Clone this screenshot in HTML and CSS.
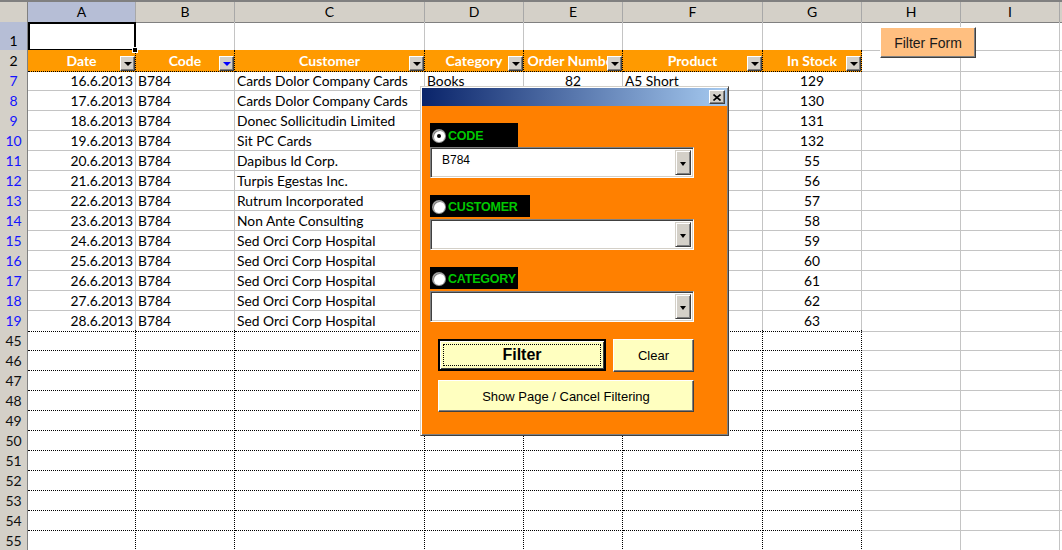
FILE: index.html
```html
<!DOCTYPE html>
<html>
<head>
<meta charset="utf-8">
<link rel="stylesheet" href="styles.css">
</head>
<body>
<div class="sheet">
  <div class="row colhead">
    <div class="corner"></div>
    <div class="ch sel">A</div>
    <div class="ch">B</div>
    <div class="ch">C</div>
    <div class="ch">D</div>
    <div class="ch">E</div>
    <div class="ch">F</div>
    <div class="ch">G</div>
    <div class="ch">H</div>
    <div class="ch">I</div>
    <div class="ch fill"></div>
  </div>

  <div class="row r1">
    <div class="rh sel">1</div>
    <div class="c a1"><span class="handle"></span></div>
    <div class="c mq"></div><div class="c mq"></div><div class="c mq"></div><div class="c mq"></div><div class="c mq"></div><div class="c mq"></div>
    <div class="c"></div><div class="c"></div><div class="c"></div>
  </div>

  <div class="row r2">
    <div class="rh hid">2</div>
    <div class="c hd">Date<span class="dd"></span></div>
    <div class="c hd">Code<span class="dd on"></span></div>
    <div class="c hd">Customer<span class="dd"></span></div>
    <div class="c hd">Category<span class="dd"></span></div>
    <div class="c hd">Order Number<span class="dd"></span></div>
    <div class="c hd">Product<span class="dd"></span></div>
    <div class="c hd">In Stock<span class="dd"></span></div>
    <div class="c"></div><div class="c"></div><div class="c"></div>
  </div>

  <div class="row"><div class="rh blue">7</div><div class="c rt">16.6.2013</div><div class="c">B784</div><div class="c">Cards Dolor Company Cards</div><div class="c">Books</div><div class="c ct">82</div><div class="c">A5 Short</div><div class="c ct">129</div><div class="c"></div><div class="c"></div><div class="c"></div></div>
  <div class="row"><div class="rh blue">8</div><div class="c rt">17.6.2013</div><div class="c">B784</div><div class="c">Cards Dolor Company Cards</div><div class="c"></div><div class="c"></div><div class="c"></div><div class="c ct">130</div><div class="c"></div><div class="c"></div><div class="c"></div></div>
  <div class="row"><div class="rh blue">9</div><div class="c rt">18.6.2013</div><div class="c">B784</div><div class="c">Donec Sollicitudin Limited</div><div class="c"></div><div class="c"></div><div class="c"></div><div class="c ct">131</div><div class="c"></div><div class="c"></div><div class="c"></div></div>
  <div class="row"><div class="rh blue">10</div><div class="c rt">19.6.2013</div><div class="c">B784</div><div class="c">Sit PC Cards</div><div class="c"></div><div class="c"></div><div class="c"></div><div class="c ct">132</div><div class="c"></div><div class="c"></div><div class="c"></div></div>
  <div class="row"><div class="rh blue">11</div><div class="c rt">20.6.2013</div><div class="c">B784</div><div class="c">Dapibus Id Corp.</div><div class="c"></div><div class="c"></div><div class="c"></div><div class="c ct">55</div><div class="c"></div><div class="c"></div><div class="c"></div></div>
  <div class="row"><div class="rh blue">12</div><div class="c rt">21.6.2013</div><div class="c">B784</div><div class="c">Turpis Egestas Inc.</div><div class="c"></div><div class="c"></div><div class="c"></div><div class="c ct">56</div><div class="c"></div><div class="c"></div><div class="c"></div></div>
  <div class="row"><div class="rh blue">13</div><div class="c rt">22.6.2013</div><div class="c">B784</div><div class="c">Rutrum Incorporated</div><div class="c"></div><div class="c"></div><div class="c"></div><div class="c ct">57</div><div class="c"></div><div class="c"></div><div class="c"></div></div>
  <div class="row"><div class="rh blue">14</div><div class="c rt">23.6.2013</div><div class="c">B784</div><div class="c">Non Ante Consulting</div><div class="c"></div><div class="c"></div><div class="c"></div><div class="c ct">58</div><div class="c"></div><div class="c"></div><div class="c"></div></div>
  <div class="row"><div class="rh blue">15</div><div class="c rt">24.6.2013</div><div class="c">B784</div><div class="c">Sed Orci Corp Hospital</div><div class="c"></div><div class="c"></div><div class="c"></div><div class="c ct">59</div><div class="c"></div><div class="c"></div><div class="c"></div></div>
  <div class="row"><div class="rh blue">16</div><div class="c rt">25.6.2013</div><div class="c">B784</div><div class="c">Sed Orci Corp Hospital</div><div class="c"></div><div class="c"></div><div class="c"></div><div class="c ct">60</div><div class="c"></div><div class="c"></div><div class="c"></div></div>
  <div class="row"><div class="rh blue">17</div><div class="c rt">26.6.2013</div><div class="c">B784</div><div class="c">Sed Orci Corp Hospital</div><div class="c"></div><div class="c"></div><div class="c"></div><div class="c ct">61</div><div class="c"></div><div class="c"></div><div class="c"></div></div>
  <div class="row"><div class="rh blue">18</div><div class="c rt">27.6.2013</div><div class="c">B784</div><div class="c">Sed Orci Corp Hospital</div><div class="c"></div><div class="c"></div><div class="c"></div><div class="c ct">62</div><div class="c"></div><div class="c"></div><div class="c"></div></div>
  <div class="row r19"><div class="rh blue hid">19</div><div class="c rt">28.6.2013</div><div class="c">B784</div><div class="c">Sed Orci Corp Hospital</div><div class="c"></div><div class="c"></div><div class="c"></div><div class="c ct">63</div><div class="c"></div><div class="c"></div><div class="c"></div></div>

  <div class="row pb"><div class="rh">45</div><div class="c"></div><div class="c"></div><div class="c"></div><div class="c"></div><div class="c"></div><div class="c"></div><div class="c"></div><div class="c"></div><div class="c"></div><div class="c"></div></div>
  <div class="row pb"><div class="rh">46</div><div class="c"></div><div class="c"></div><div class="c"></div><div class="c"></div><div class="c"></div><div class="c"></div><div class="c"></div><div class="c"></div><div class="c"></div><div class="c"></div></div>
  <div class="row pb"><div class="rh">47</div><div class="c"></div><div class="c"></div><div class="c"></div><div class="c"></div><div class="c"></div><div class="c"></div><div class="c"></div><div class="c"></div><div class="c"></div><div class="c"></div></div>
  <div class="row pb"><div class="rh">48</div><div class="c"></div><div class="c"></div><div class="c"></div><div class="c"></div><div class="c"></div><div class="c"></div><div class="c"></div><div class="c"></div><div class="c"></div><div class="c"></div></div>
  <div class="row pb"><div class="rh">49</div><div class="c"></div><div class="c"></div><div class="c"></div><div class="c"></div><div class="c"></div><div class="c"></div><div class="c"></div><div class="c"></div><div class="c"></div><div class="c"></div></div>
  <div class="row pb"><div class="rh">50</div><div class="c"></div><div class="c"></div><div class="c"></div><div class="c"></div><div class="c"></div><div class="c"></div><div class="c"></div><div class="c"></div><div class="c"></div><div class="c"></div></div>
  <div class="row pb"><div class="rh">51</div><div class="c"></div><div class="c"></div><div class="c"></div><div class="c"></div><div class="c"></div><div class="c"></div><div class="c"></div><div class="c"></div><div class="c"></div><div class="c"></div></div>
  <div class="row pb"><div class="rh">52</div><div class="c"></div><div class="c"></div><div class="c"></div><div class="c"></div><div class="c"></div><div class="c"></div><div class="c"></div><div class="c"></div><div class="c"></div><div class="c"></div></div>
  <div class="row pb"><div class="rh">53</div><div class="c"></div><div class="c"></div><div class="c"></div><div class="c"></div><div class="c"></div><div class="c"></div><div class="c"></div><div class="c"></div><div class="c"></div><div class="c"></div></div>
  <div class="row pb"><div class="rh">54</div><div class="c"></div><div class="c"></div><div class="c"></div><div class="c"></div><div class="c"></div><div class="c"></div><div class="c"></div><div class="c"></div><div class="c"></div><div class="c"></div></div>
  <div class="row pb"><div class="rh">55</div><div class="c"></div><div class="c"></div><div class="c"></div><div class="c"></div><div class="c"></div><div class="c"></div><div class="c"></div><div class="c"></div><div class="c"></div><div class="c"></div></div>

  <button class="formbtn">Filter Form</button>

  <div class="dialog">
    <div class="titlebar">
      <span class="close"><svg width="8" height="7" viewBox="0 0 8 7"><path d="M0.5 0.5 L7.5 6.5 M7.5 0.5 L0.5 6.5" stroke="#000" stroke-width="1.6" fill="none"/></svg></span>
    </div>
    <div class="dbody">
      <div class="opt w88 first"><span class="radio on"></span>CODE</div>
      <div class="combo"><span class="val">B784</span><span class="cbtn"></span></div>
      <div class="opt w100"><span class="radio"></span>CUSTOMER</div>
      <div class="combo"><span class="val"></span><span class="cbtn"></span></div>
      <div class="opt w88"><span class="radio"></span>CATEGORY</div>
      <div class="combo"><span class="val"></span><span class="cbtn"></span></div>
      <div class="btnrow">
        <button class="yb filter"><span class="focus">Filter</span></button>
        <button class="yb clear">Clear</button>
      </div>
      <button class="yb show">Show Page / Cancel Filtering</button>
    </div>
  </div>
</div>
</body>
</html>
```

FILE: styles.css
```css
* { box-sizing: border-box; }
html, body { margin: 0; padding: 0; background: #fff; }
body { width: 1062px; height: 550px; overflow: hidden; font-family: Lato, "Liberation Sans", sans-serif; font-size: 14px; color: #000; }

.sheet { position: relative; width: 1062px; height: 550px; }

.row {
  display: grid;
  grid-template-columns: 28px 108px 99px 190px 99px 99px 140px 99px 99px 99px 1fr;
  height: 20px;
}

.colhead { height: 22px; border-top: 2px solid #808080; }
.corner { background: #d4d0c8; border-right: 1px solid #808080; border-bottom: 1px solid #808080; }
.ch {
  background: #d4d0c8;
  border-right: 1px solid #a8a8a8;
  border-bottom: 1px solid #808080;
  text-align: center;
  line-height: 20px;
  font-size: 14px;
}
.ch.sel { background: #b6bed6; border-bottom-color: #0a246a; }
.ch.fill { border-right: none; }

.rh {
  background: #d4d0c8;
  border-right: 1px solid #808080;
  border-bottom: 1px solid #a8a8a8;
  text-align: center;
  padding-top: 2px;
  line-height: 18px;
  font-size: 14px;
}
.rh.sel { background: #b6bed6; border-bottom-color: #0a246a; }
.rh.blue { color: #1414ff; }
.rh.hid { border-bottom: 2px solid #808080; }

.c {
  border-right: 1px solid #c4c4c4;
  border-bottom: 1px solid #c4c4c4;
  white-space: nowrap;
  overflow: hidden;
  padding: 2px 2px 0;
  line-height: 18px;
  font-size: 13.8px;
}
.c.rt { text-align: right; }
.c.ct { text-align: center; }

.r1 { height: 28px; }
.r1 .rh { padding-top: 10px; }
.r1 .c.mq { border-bottom: 1px dotted #000; }
.a1 {
  position: relative;
  overflow: visible;
  border: 2px solid #000;
}
.handle {
  position: absolute;
  right: -4px;
  bottom: -4px;
  width: 6px;
  height: 6px;
  background: #000;
  border: 1px solid #fff;
  z-index: 2;
}

.r2 .c.hd {
  position: relative;
  background: #ff9a00;
  color: #fff;
  font-weight: bold;
  font-size: 14px;
  text-align: center;
  border-right: 1px dotted #000;
  border-bottom: 1px dotted #000;
  padding: 2px 0 0;
  line-height: 18px;
  overflow: hidden;
}
.dd {
  position: absolute;
  right: 0;
  bottom: 0;
  width: 15px;
  height: 15px;
  background: #d4d0c8;
  border: 1px solid;
  border-color: #fff #404040 #404040 #fff;
  box-shadow: inset -1px -1px #808080;
}
.dd::after {
  content: "";
  position: absolute;
  left: 3px;
  top: 5px;
  border-left: 4px solid transparent;
  border-right: 4px solid transparent;
  border-top: 4px solid #000;
}
.dd.on::after { border-top-color: #0000ff; }

.r19 .c:nth-child(-n+8) { border-bottom: 1px dotted #000; }
.pb .c:nth-child(-n+8) { border-right: 1px dotted #000; border-bottom: 1px dotted #000; }
.pb .rh { color: #111; }

/* Filter Form button */
.formbtn {
  position: absolute;
  left: 880px;
  top: 27px;
  width: 96px;
  height: 31px;
  background: #ffbf80;
  border: 1px solid;
  border-color: #fff #404040 #404040 #fff;
  box-shadow: inset -1px -1px #808080;
  font-family: "Liberation Sans", Arial, sans-serif;
  font-size: 14px;
  color: #1a1a1a;
  padding: 0;
}

/* Dialog */
.dialog {
  position: absolute;
  left: 420px;
  top: 86px;
  width: 309px;
  height: 350px;
  background: #d4d0c8;
  border: 1px solid;
  border-color: #d4d0c8 #404040 #404040 #d4d0c8;
  box-shadow: inset 1px 1px #fff, inset -1px -1px #808080;
  padding: 1px;
  display: flex;
  flex-direction: column;
  font-family: "Liberation Sans", Arial, sans-serif;
  z-index: 5;
}
.titlebar {
  height: 18px;
  background: linear-gradient(to right, #0a246a, #a6caf0);
  display: flex;
  justify-content: flex-end;
  align-items: flex-start;
  padding: 2px 2px 0 0;
}
.close {
  width: 16px;
  height: 14px;
  background: #d4d0c8;
  border: 1px solid;
  border-color: #fff #404040 #404040 #fff;
  box-shadow: inset -1px -1px #808080;
  display: flex;
  align-items: center;
  justify-content: center;
}
.close svg { display: block; margin-left: -1px; }

.dbody {
  flex: 1;
  background: #ff8000;
  padding: 0 0 0 8px;
  display: flex;
  flex-direction: column;
  align-items: flex-start;
}
.opt {
  height: 22px;
  margin: 17px 0 2px;
  background: #000;
  color: #00c800;
  font-weight: bold;
  font-size: 12.5px;
  letter-spacing: -0.2px;
  display: flex;
  align-items: center;
  padding-left: 3px;
  padding-top: 1px;
}
.opt.w88 { width: 88px; }
.opt.w100 { width: 100px; }
.opt.first { height: 24px; margin-bottom: 0; }
.radio {
  width: 12px;
  height: 12px;
  border-radius: 50%;
  background: #fff;
  box-shadow: inset 1px 1px 0 #808080, 0 0 0 1px #9a9a9a;
  margin-right: 3px;
  position: relative;
}
.radio.on::after {
  content: "";
  position: absolute;
  left: 4px;
  top: 4px;
  width: 4px;
  height: 4px;
  border-radius: 50%;
  background: #000;
}

.combo {
  width: 264px;
  height: 31px;
  background: #fff;
  border: 1px solid;
  border-color: #808080 #fff #fff #808080;
  box-shadow: inset 1px 1px #404040, inset -1px -1px #d4d0c8;
  display: flex;
  padding: 2px;
}
.combo .val {
  flex: 1;
  font-size: 12px;
  padding: 3px 0 0 9px;
}
.cbtn {
  width: 16px;
  background: #d4d0c8;
  border: 1px solid;
  border-color: #d4d0c8 #404040 #404040 #d4d0c8;
  box-shadow: inset 1px 1px #fff, inset -1px -1px #808080;
  position: relative;
}
.cbtn::after {
  content: "";
  position: absolute;
  left: 4px;
  top: 11px;
  border-left: 3.5px solid transparent;
  border-right: 3.5px solid transparent;
  border-top: 4px solid #000;
}

.btnrow {
  display: flex;
  gap: 7px;
  margin: 17px 0 0 8px;
  align-items: flex-start;
}
.yb {
  background: #ffffc0;
  border: 1px solid;
  border-color: #fff #404040 #404040 #fff;
  box-shadow: inset -1px -1px #808080;
  font-family: "Liberation Sans", Arial, sans-serif;
  font-size: 13px;
  color: #000;
  padding: 0;
}
.filter {
  width: 168px;
  height: 32px;
  border: 2px solid #000;
  box-shadow: inset 1px 1px #fff, inset -1px -1px #404040;
  padding: 3px;
  font-size: 16px;
  font-weight: bold;
}
.filter .focus {
  display: flex;
  align-items: center;
  justify-content: center;
  height: 100%;
  border: 1px dotted #000;
}
.clear { width: 81px; height: 33px; }
.show { width: 256px; height: 32px; margin: 8px 0 0 8px; }
```
